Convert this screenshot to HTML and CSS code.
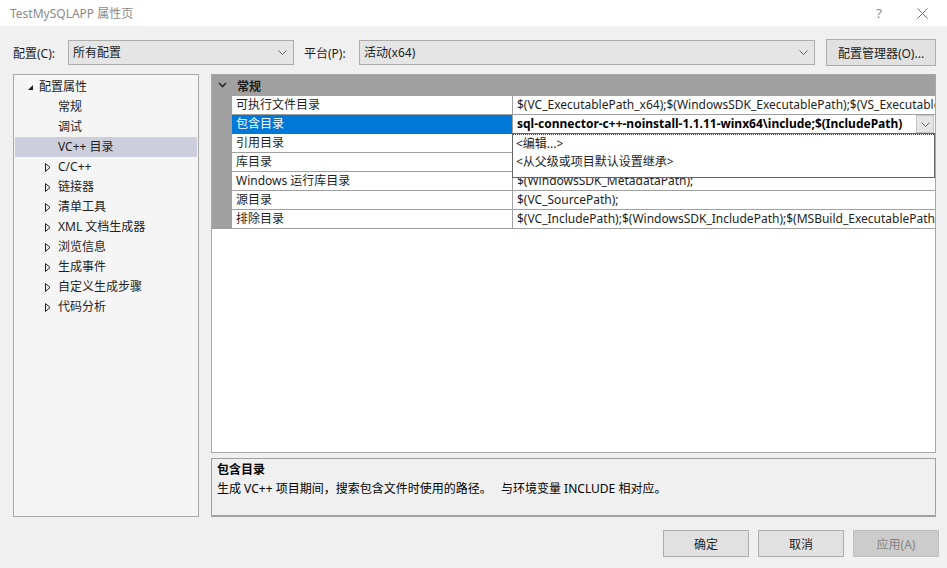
FILE: index.html
```html
<!DOCTYPE html>
<html>
<head>
  <title>TestMySQLAPP 属性页</title>
  <link rel="stylesheet" href="styles.css">
</head>
<body>
  <div class="titlebar">
    <span class="title">TestMySQLAPP 属性页</span>
    <span class="help">?</span>
    <svg class="close" width="11" height="11" viewBox="0 0 11 11"><path d="M0.5 0.5L10.5 10.5M10.5 0.5L0.5 10.5" stroke="#707070" stroke-width="1"/></svg>
  </div>

  <div class="toolbar">
    <span class="tb-label">配置(C):</span>
    <div class="combo combo-config">
      <span>所有配置</span>
      <svg class="chev" width="9" height="5" viewBox="0 0 9 5"><polyline points="0.5,0.5 4.5,4.5 8.5,0.5" fill="none" stroke="#606060"/></svg>
    </div>
    <span class="tb-label tb-platform">平台(P):</span>
    <div class="combo combo-platform">
      <span>活动(x64)</span>
      <svg class="chev" width="9" height="5" viewBox="0 0 9 5"><polyline points="0.5,0.5 4.5,4.5 8.5,0.5" fill="none" stroke="#606060"/></svg>
    </div>
    <button class="btn btn-manager">配置管理器(O)...</button>
  </div>

  <div class="content">
    <ul class="tree">
      <li class="tree-root">
        <svg class="tri" width="7" height="7" viewBox="0 0 7 7"><polygon points="6,1 6,6 1,6" fill="#1e1e1e"/></svg>
        配置属性
      </li>
      <li class="tree-item">常规</li>
      <li class="tree-item">调试</li>
      <li class="tree-item selected">VC++ 目录</li>
      <li class="tree-item"><svg class="tri-open" width="6" height="9" viewBox="0 0 6 9"><polygon points="0.5,0.5 5,4.5 0.5,8.5" fill="none" stroke="#1e1e1e"/></svg>C/C++</li>
      <li class="tree-item"><svg class="tri-open" width="6" height="9" viewBox="0 0 6 9"><polygon points="0.5,0.5 5,4.5 0.5,8.5" fill="none" stroke="#1e1e1e"/></svg>链接器</li>
      <li class="tree-item"><svg class="tri-open" width="6" height="9" viewBox="0 0 6 9"><polygon points="0.5,0.5 5,4.5 0.5,8.5" fill="none" stroke="#1e1e1e"/></svg>清单工具</li>
      <li class="tree-item"><svg class="tri-open" width="6" height="9" viewBox="0 0 6 9"><polygon points="0.5,0.5 5,4.5 0.5,8.5" fill="none" stroke="#1e1e1e"/></svg>XML 文档生成器</li>
      <li class="tree-item"><svg class="tri-open" width="6" height="9" viewBox="0 0 6 9"><polygon points="0.5,0.5 5,4.5 0.5,8.5" fill="none" stroke="#1e1e1e"/></svg>浏览信息</li>
      <li class="tree-item"><svg class="tri-open" width="6" height="9" viewBox="0 0 6 9"><polygon points="0.5,0.5 5,4.5 0.5,8.5" fill="none" stroke="#1e1e1e"/></svg>生成事件</li>
      <li class="tree-item"><svg class="tri-open" width="6" height="9" viewBox="0 0 6 9"><polygon points="0.5,0.5 5,4.5 0.5,8.5" fill="none" stroke="#1e1e1e"/></svg>自定义生成步骤</li>
      <li class="tree-item"><svg class="tri-open" width="6" height="9" viewBox="0 0 6 9"><polygon points="0.5,0.5 5,4.5 0.5,8.5" fill="none" stroke="#1e1e1e"/></svg>代码分析</li>
    </ul>

    <div class="right">
      <div class="grid">
        <div class="grid-header">
          <svg class="gh-chev" width="20" height="19" viewBox="0 0 20 19"><polyline points="6,7 9.5,10.5 13,7" fill="none" stroke="#2b2b2b" stroke-width="1.6"/></svg>
          <span class="gh-title">常规</span>
        </div>
        <div class="grid-row">
          <div class="gutter"></div>
          <div class="name">可执行文件目录</div>
          <div class="value">$(VC_ExecutablePath_x64);$(WindowsSDK_ExecutablePath);$(VS_ExecutablePath);$(MSBuild_ExecutablePath)</div>
        </div>
        <div class="grid-row">
          <div class="gutter"></div>
          <div class="name active">包含目录</div>
          <div class="value editing">
            <span class="edit-text">sql-connector-c++-noinstall-1.1.11-winx64\include;$(IncludePath)</span>
            <span class="drop-btn"><svg width="9" height="5" viewBox="0 0 9 5"><polyline points="0.5,0.5 4.5,4.5 8.5,0.5" fill="none" stroke="#606060"/></svg></span>
            <div class="popup">
              <div class="popup-item first">&lt;编辑...&gt;</div>
              <div class="popup-item">&lt;从父级或项目默认设置继承&gt;</div>
            </div>
          </div>
        </div>
        <div class="grid-row">
          <div class="gutter"></div>
          <div class="name">引用目录</div>
          <div class="value">$(VC_ReferencesPath_x64);</div>
        </div>
        <div class="grid-row">
          <div class="gutter"></div>
          <div class="name">库目录</div>
          <div class="value">$(VC_LibraryPath_x64);$(WindowsSDK_LibraryPath_x64);$(NETFXKitsDir)Lib\um\x64</div>
        </div>
        <div class="grid-row">
          <div class="gutter"></div>
          <div class="name">Windows 运行库目录</div>
          <div class="value">$(WindowsSDK_MetadataPath);</div>
        </div>
        <div class="grid-row">
          <div class="gutter"></div>
          <div class="name">源目录</div>
          <div class="value">$(VC_SourcePath);</div>
        </div>
        <div class="grid-row">
          <div class="gutter"></div>
          <div class="name">排除目录</div>
          <div class="value">$(VC_IncludePath);$(WindowsSDK_IncludePath);$(MSBuild_ExecutablePath);$(VC_LibraryPath_x64)</div>
        </div>
      </div>

      <div class="desc">
        <div class="desc-title">包含目录</div>
        <div class="desc-text">生成 VC++ 项目期间，搜索包含文件时使用的路径。&nbsp;&nbsp;&nbsp;与环境变量 INCLUDE 相对应。</div>
      </div>
    </div>
  </div>

  <div class="footer">
    <button class="btn">确定</button>
    <button class="btn">取消</button>
    <button class="btn disabled">应用(A)</button>
  </div>
</body>
</html>
```

FILE: styles.css
```css
html, body {
  margin: 0;
  height: 100%;
}

body {
  background: #f0f0f0;
  font-family: "Noto Sans", "Noto Sans CJK SC", sans-serif;
  font-size: 12px;
  color: #1e1e1e;
  overflow: hidden;
}

.titlebar {
  height: 26px;
  background: #ffffff;
  display: flex;
  align-items: center;
  padding-left: 10px;
}

.title {
  color: #8a8a8a;
  flex: 1;
}

.help {
  color: #8a8a8a;
  font-size: 13px;
  margin-right: 35px;
}

.close {
  margin-right: 19px;
}

.toolbar {
  display: flex;
  align-items: center;
  height: 27px;
  margin-top: 13px;
  padding-left: 13px;
}

.tb-label {
  width: 55px;
  white-space: nowrap;
}

.tb-platform {
  margin-left: 10px;
}

.combo {
  height: 23px;
  box-sizing: content-box;
  background: #e5e5e5;
  border: 1px solid #acacac;
  display: flex;
  align-items: center;
  padding: 0 4px;
  line-height: 23px;
}

.combo span {
  flex: 1;
}

.combo .chev {
  margin-right: 2px;
}

.combo-config {
  width: 216px;
}

.combo-platform {
  width: 446px;
}

.btn {
  font-family: inherit;
  font-size: 12px;
  color: #1e1e1e;
  background: #e1e1e1;
  border: 1px solid #adadad;
  height: 27px;
  width: 86px;
  padding: 0;
}

.btn-manager {
  width: 110px;
  margin-left: 11px;
}

.btn.disabled {
  background: #cccccc;
  border-color: #bfbfbf;
  color: #838383;
}

.content {
  display: flex;
  gap: 12px;
  margin-top: 8px;
  padding-left: 13px;
}

/* left tree */
.tree {
  list-style: none;
  margin: 0;
  padding: 2px 1px 1px;
  width: 182px;
  height: 438px;
  background: #f5f5f5;
  border: 1px solid #a8a8a8;
}

.tree li {
  height: 20px;
  line-height: 20px;
  white-space: nowrap;
  display: flex;
  align-items: center;
}

.tree-root {
  padding-left: 12px;
}

.tree-root .tri {
  margin-right: 5px;
}

.tree-item {
  padding-left: 43px;
}

.tree-item .tri-open {
  margin-left: -13px;
  margin-right: 7px;
}

.tree-item.selected {
  background: #cccedb;
}

/* right side */
.right {
  width: 725px;
  display: flex;
  flex-direction: column;
  gap: 5px;
}

.grid {
  height: 377px;
  background: #ffffff;
  border: 1px solid #a8a8a8;
}

.grid-header {
  height: 21px;
  background: #a0a0a0;
  display: flex;
  align-items: center;
}

.gh-chev {
  margin-left: 1px;
  margin-right: 4px;
}

.gh-title {
  font-weight: bold;
  color: #1e1e1e;
}

.grid-row {
  display: flex;
  height: 19px;
}

.gutter {
  width: 20px;
  background: #a0a0a0;
}

.name,
.value {
  box-sizing: border-box;
  height: 19px;
  line-height: 18px;
  border-bottom: 1px solid #a0a0a0;
  padding-left: 4px;
  white-space: nowrap;
  overflow: hidden;
}

.name {
  width: 281px;
  border-right: 1px solid #a0a0a0;
}

.name.active {
  background: #0078d7;
  color: #ffffff;
  border-bottom-color: #0078d7;
}

.value {
  width: 422px;
}

.value.editing {
  position: relative;
  overflow: visible;
  display: flex;
  align-items: center;
  padding-right: 1px;
}

.edit-text {
  flex: 1;
  font-weight: bold;
  color: #000000;
  overflow: hidden;
}

.drop-btn {
  width: 16px;
  height: 16px;
  background: #e5e5e5;
  border: 1px solid #c4c4c4;
  display: flex;
  align-items: center;
  justify-content: center;
}

.popup {
  position: absolute;
  top: 18px;
  left: -1px;
  width: 421px;
  height: 43px;
  background: #ffffff;
  border: 1px solid #646464;
  z-index: 2;
}

.popup-item {
  height: 18px;
  line-height: 18px;
  padding-left: 3px;
  margin-top: 1px;
}

.popup-item.first {
  margin-top: 0;
  border-top: 1px dotted #404040;
  height: 17px;
}

.desc {
  height: 54px;
  border: 1px solid #a0a0a0;
  border-bottom-width: 2px;
  padding: 2px 5px 0;
}

.desc-title {
  font-weight: bold;
  line-height: 18px;
  color: #000000;
}

.desc-text {
  line-height: 19px;
  color: #000000;
}

.footer {
  display: flex;
  justify-content: flex-end;
  gap: 9px;
  margin-top: 13px;
  padding-right: 8px;
}
```
